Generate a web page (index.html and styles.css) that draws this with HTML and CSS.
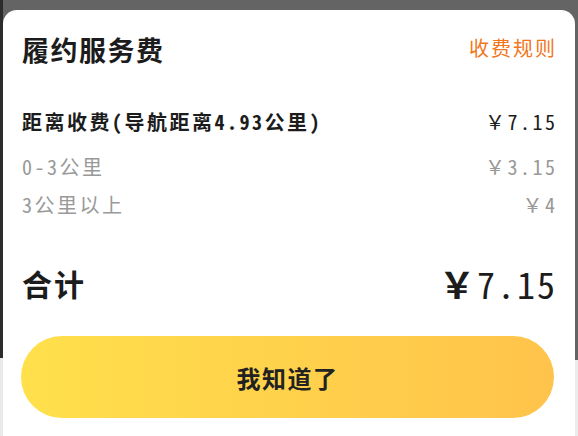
FILE: index.html
```html
<!DOCTYPE html>
<html lang="zh-CN">
<head>
    <meta charset="UTF-8">
    <meta name="viewport" content="width=device-width, initial-scale=1.0">
    <title>履约服务费</title>
    <link rel="stylesheet" href="styles.css">
</head>
<body>
    <div class="sheet">
        <div class="sheet-header">
            <h1 class="sheet-title">履约服务费</h1>
            <a class="rule-link" href="#">收费规则</a>
        </div>

        <div class="fee-list">
            <div class="fee-row fee-main">
                <span>距离收费(导航距离4.93公里)</span>
                <span class="amount">￥7.15</span>
            </div>
            <div class="fee-row fee-sub">
                <span>0-3公里</span>
                <span class="amount">￥3.15</span>
            </div>
            <div class="fee-row fee-sub">
                <span>3公里以上</span>
                <span class="amount">￥4</span>
            </div>
        </div>

        <div class="fee-total">
            <span>合计</span>
            <span class="amount"><span class="yen">￥</span>7.15</span>
        </div>

        <button class="confirm-button">我知道了</button>
    </div>
</body>
</html>
```

FILE: styles.css
```css
html, body {
    margin: 0;
    height: 100%;
}
body {
    padding: 10px 3px 0 3px;
    box-sizing: border-box;
    font-family: "Noto Sans Mono CJK SC", "Noto Sans CJK SC", monospace;
    /* dimmed page behind the sheet */
    background:
        linear-gradient(#2c2c2c, #2c2c2c) left top / 3px 358px no-repeat,
        linear-gradient(#e9e9e9, #e9e9e9) left bottom / 3px 78px no-repeat,
        linear-gradient(#ececec, #ececec) right bottom / 3px 76px no-repeat,
        #646464;
}
.sheet {
    background: #fff;
    border-radius: 14px 14px 0 0;
    height: 100%;
    padding: 22px 20px 0 19px;
    box-sizing: border-box;
}
.sheet-header {
    display: flex;
    justify-content: space-between;
    align-items: center;
    height: 36px;
}
.sheet-title {
    margin: 0;
    font-size: 27px;
    font-weight: bold;
    letter-spacing: 1.5px;
    color: #1c1c1c;
    line-height: 36px;
}
.rule-link {
    color: #f2761c;
    font-size: 20px;
    letter-spacing: 2px;
    margin-right: -2px;
    text-decoration: none;
    margin-top: -6px;
}
.fee-list {
    margin-top: 39px;
    display: flex;
    flex-direction: column;
    gap: 8px;
}
.fee-row {
    display: flex;
    justify-content: space-between;
    line-height: 30px;
    font-size: 20px;
    letter-spacing: 2.5px;
}
.fee-main {
    font-weight: bold;
    color: #1c1c1c;
    margin-bottom: 7px;
}
.fee-main .amount {
    font-weight: normal;
}
.fee-sub {
    color: #999;
}
.amount {
    margin-right: -2.5px;
}
.fee-total {
    margin-top: 41px;
    display: flex;
    justify-content: space-between;
    align-items: center;
    line-height: 44px;
    font-weight: bold;
    color: #1c1c1c;
    font-size: 30px;
    letter-spacing: 2px;
}
.fee-total .amount {
    font-size: 36px;
    font-weight: 500;
    margin-right: -2px;
}
.fee-total .yen {
    font-weight: 900;
}
.confirm-button {
    display: block;
    width: 100%;
    height: 82px;
    margin-top: 31px;
    margin-left: -1px;
    border: none;
    border-radius: 41px;
    background: linear-gradient(90deg, #ffe04b, #ffc34b);
    font-family: inherit;
    font-size: 24px;
    font-weight: bold;
    letter-spacing: 1.5px;
    color: #222;
    cursor: pointer;
}
```
